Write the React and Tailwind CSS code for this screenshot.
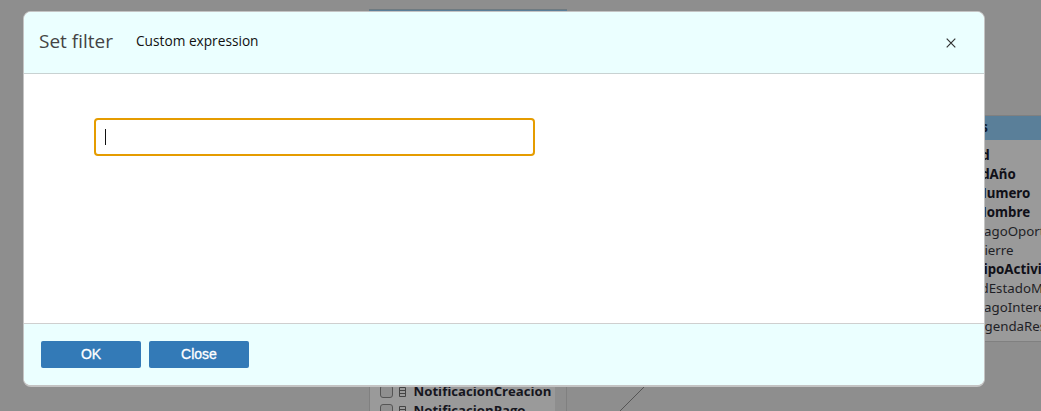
import React from "react";

const rows = [
  ["Id", true],
  ["IdAño", true],
  ["Numero", true],
  ["Nombre", true],
  ["PagoOportuno", false],
  ["Cierre", false],
  ["TipoActividad", true],
  ["IdEstadoMatricula", false],
  ["PagoIntereses", false],
  ["AgendaResultados", false],
];

function Check({ name }) {
  return (
    <div className="flex h-[19px] items-center gap-[6px] whitespace-nowrap">
      <span className="h-[13px] w-[13px] shrink-0 rounded-[3px] border border-[#555] bg-[#8f8f8f]" />
      <svg width="7" height="10" viewBox="0 0 7 10" className="shrink-0 text-[#444]" fill="none" stroke="currentColor">
        <path d="M.5.5h6v9h-6zM.5 3.5h6M.5 6.5h6" />
      </svg>
      <span className="ml-[2px] text-[13.2px] font-bold leading-[19px] text-[#16161e]">{name}</span>
    </div>
  );
}

export default function App() {
  return (
    <div className="relative h-[411px] w-[1041px] overflow-hidden bg-[#8e8e8e] font-['Open_Sans','Noto_Sans',sans-serif]">
      {/* Diagram behind the overlay */}
      <div className="absolute left-[369px] top-[9px] h-[3px] w-[198px] border-t border-[#6f7a80] bg-[#5a7f99]" />
      <div className="absolute left-[369px] top-[380px] h-[40px] w-[198px] overflow-hidden border-x border-[#808080] bg-[#8e8e8e] pr-[11px]">
        <div className="h-full bg-[#9a9a9a] pl-[9.5px] pt-[2px]">
          <Check name="NotificacionCreacion" />
          <Check name="NotificacionPago" />
        </div>
      </div>
      <svg className="absolute left-[610px] top-[380px]" width="50" height="40" fill="none" stroke="#555" strokeWidth="1">
        <path d="M10 31 L38 3" />
      </svg>
      <div className="absolute left-[900px] top-[115px] w-[160px] border-y border-[#808080] bg-[#9a9a9a] pb-[5px] font-['Noto_Sans',sans-serif]">
        <div className="flex h-[24px] items-center justify-end bg-[#5a7f99] pr-[72px] text-[13.3px] font-bold text-[#111827]">Actividades</div>
        <div className="pl-[76px] pt-[6px]">
          {rows.map(([t, bold]) => (
            <div key={t} className={`h-[19px] whitespace-nowrap text-[13.3px] leading-[19px] ${bold ? "font-bold text-[#101018]" : "text-[#1f1f26]"}`}>
              {t}
            </div>
          ))}
        </div>
      </div>

      {/* Modal */}
      <div className="absolute left-[23px] top-[11px] flex h-[376px] w-[962px] flex-col overflow-hidden rounded-[8px] border border-b-2 border-[#c4c4c4] bg-white">
        <div className="flex h-[62px] shrink-0 items-center border-b border-[#c8d2d2] bg-[#ebffff] pl-[15px] pr-[28px]">
          <span className="-translate-y-[2px] text-[19px] leading-[24px] text-[#444]">Set filter</span>
          <span className="ml-[23px] -translate-y-[2px] text-[13.7px] leading-[18px] text-[#111]">Custom expression</span>
          <svg className="ml-auto" width="10" height="10" viewBox="0 0 10 10" fill="none" stroke="#333" strokeWidth="1.2">
            <path d="M.7.7l8.6 8.6M9.3.7L.7 9.3" />
          </svg>
        </div>
        <div className="flex-1 pl-[70px] pt-[44px]">
          <div className="flex h-[38px] w-[441px] items-center rounded-[4px] border-2 border-[#e59c00] pl-[9px]">
            <span className="h-[16px] w-px bg-[#111]" />
          </div>
        </div>
        <div className="flex h-[62px] shrink-0 items-center gap-[8px] border-t border-[#cfcfcf] bg-[#ebffff] pl-[17px]">
          <button className="h-[27px] w-[100px] rounded-[2px] bg-[#337ab7] font-['Liberation_Sans',sans-serif] text-[14px] font-normal text-white [-webkit-text-stroke:0.3px_white]">OK</button>
          <button className="h-[27px] w-[100px] rounded-[2px] bg-[#337ab7] font-['Liberation_Sans',sans-serif] text-[14px] font-normal text-white [-webkit-text-stroke:0.3px_white]">Close</button>
        </div>
      </div>
    </div>
  );
}
